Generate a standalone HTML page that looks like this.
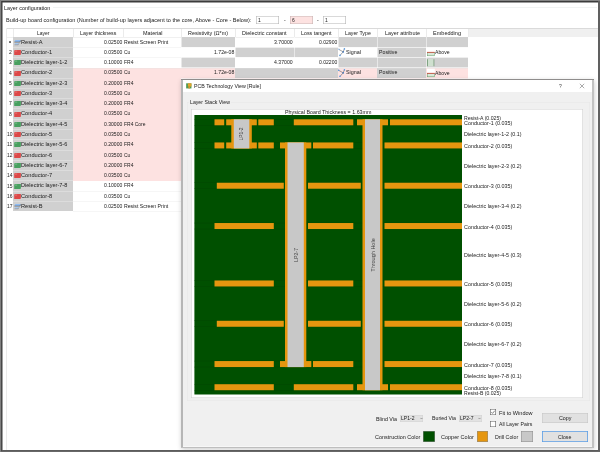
<!DOCTYPE html>
<html lang="en"><head><meta charset="utf-8"><title>PCB Technology View</title>
<style>
html,body{margin:0;padding:0;background:#fff;}
#root{will-change:transform;position:relative;width:600px;height:452px;overflow:hidden;background:#fff;font-family:"Liberation Sans",sans-serif;}
.b{position:absolute;display:block;}
.t{position:absolute;display:block;white-space:nowrap;font-size:10px;line-height:10px;height:10px;transform-origin:0 50%;}
</style></head><body><div id="root">
<span class="t" style="left:4.30px;top:2.60px;transform:scale(0.5456,0.540);color:#1a1a1a">Layer configuration</span>
<div class="b" style="left:52.50px;top:7.00px;width:544.50px;height:0.80px;background:#f1f3f3;"></div>
<span class="t" style="left:6.40px;top:15.10px;transform:scale(0.5544,0.540);color:#1a1a1a">Build-up board configuration (Number of build-up layers adjacent to the core, Above - Core - Below):</span>
<div class="b" style="left:256.00px;top:16.30px;width:23.30px;height:7.90px;background:#fff;box-shadow:inset 0 0 0 0.6px #b4b4b4;"></div>
<span class="t" style="left:257.50px;top:15.20px;transform:scale(0.5000,0.540);color:#1a1a1a">1</span>
<span class="t" style="left:284.30px;top:15.20px;transform:scale(0.5000,0.540);color:#1a1a1a">-</span>
<div class="b" style="left:290.00px;top:16.30px;width:22.70px;height:7.90px;background:#fde2e1;box-shadow:inset 0 0 0 0.6px #c9b5b5;"></div>
<span class="t" style="left:291.50px;top:15.20px;transform:scale(0.5000,0.540);color:#1a1a1a">6</span>
<span class="t" style="left:317.20px;top:15.20px;transform:scale(0.5000,0.540);color:#1a1a1a">-</span>
<div class="b" style="left:323.00px;top:16.30px;width:23.30px;height:7.90px;background:#fff;box-shadow:inset 0 0 0 0.6px #b4b4b4;"></div>
<span class="t" style="left:324.50px;top:15.20px;transform:scale(0.5000,0.540);color:#1a1a1a">1</span>
<div class="b" style="left:6.00px;top:28.00px;width:591.50px;height:0.60px;background:#dadada;"></div>
<div class="b" style="left:6.00px;top:28.00px;width:1.00px;height:422.00px;background:#ebebeb;"></div>
<div class="b" style="left:468.00px;top:28.60px;width:129.50px;height:8.30px;background:#f0f0f0;"></div>
<span class="t" style="left:37.25px;top:28.30px;transform:scale(0.4998,0.540);color:#1a1a1a">Layer</span>
<span class="t" style="left:79.85px;top:28.30px;transform:scale(0.5225,0.540);color:#1a1a1a">Layer thickness</span>
<span class="t" style="left:142.75px;top:28.30px;transform:scale(0.5483,0.540);color:#1a1a1a">Material</span>
<span class="t" style="left:188.00px;top:28.30px;transform:scale(0.5395,0.540);color:#1a1a1a">Resistivity (Ω*m)</span>
<span class="t" style="left:241.75px;top:28.30px;transform:scale(0.5447,0.540);color:#1a1a1a">Dielectric constant</span>
<span class="t" style="left:300.75px;top:28.30px;transform:scale(0.5326,0.540);color:#1a1a1a">Loss tangent</span>
<span class="t" style="left:345.10px;top:28.30px;transform:scale(0.5235,0.540);color:#1a1a1a">Layer Type</span>
<span class="t" style="left:384.50px;top:28.30px;transform:scale(0.5476,0.540);color:#1a1a1a">Layer attribute</span>
<span class="t" style="left:433.30px;top:28.30px;transform:scale(0.5535,0.540);color:#1a1a1a">Embedding</span>
<div class="b" style="left:13.00px;top:29.00px;width:0.60px;height:7.90px;background:#ebebeb;"></div>
<div class="b" style="left:72.70px;top:29.00px;width:0.60px;height:7.90px;background:#ebebeb;"></div>
<div class="b" style="left:123.30px;top:29.00px;width:0.60px;height:7.90px;background:#ebebeb;"></div>
<div class="b" style="left:180.90px;top:29.00px;width:0.60px;height:7.90px;background:#ebebeb;"></div>
<div class="b" style="left:234.70px;top:29.00px;width:0.60px;height:7.90px;background:#ebebeb;"></div>
<div class="b" style="left:293.50px;top:29.00px;width:0.60px;height:7.90px;background:#ebebeb;"></div>
<div class="b" style="left:337.70px;top:29.00px;width:0.60px;height:7.90px;background:#ebebeb;"></div>
<div class="b" style="left:377.10px;top:29.00px;width:0.60px;height:7.90px;background:#ebebeb;"></div>
<div class="b" style="left:426.00px;top:29.00px;width:0.60px;height:7.90px;background:#ebebeb;"></div>
<div class="b" style="left:467.70px;top:29.00px;width:0.60px;height:7.90px;background:#ebebeb;"></div>
<div class="b" style="left:6.60px;top:36.60px;width:461.40px;height:0.50px;background:#f0f0f0;"></div>
<div class="b" style="left:13.30px;top:36.90px;width:59.70px;height:10.27px;background:#d0d0d0;"></div>
<div class="b" style="left:9.30px;top:41.23px;width:1.40px;height:1.50px;background:#6a6a6a;border-radius:0.5px;"></div>
<svg class="b" style="left:13.8px;top:38.73px" width="7.4" height="7" viewBox="0 0 7.4 7"><path d="M1.3 1.1 L6.9 1.1 L5.9 2.9 L0.4 2.9 Z" fill="#8fbcf2"/><path d="M0.4 3.1 L5.9 3.1 L6.9 1.3" stroke="#444" stroke-width="0.55" fill="none"/><path d="M1.2 4.2 L5 4.2 L4.2 5.6 L0.5 5.6 Z" fill="#9cc4f4"/><path d="M0.5 5.8 L4.2 5.8 L5 4.4" stroke="#666" stroke-width="0.4" fill="none"/></svg>
<span class="t" style="left:21.30px;top:36.58px;transform:scale(0.5690,0.540);color:#1a1a1a">Resist-A</span>
<span class="t" style="left:104.40px;top:36.58px;transform:scale(0.5063,0.540);color:#1a1a1a">0.02500</span>
<span class="t" style="left:124.30px;top:36.58px;transform:scale(0.5171,0.540);color:#1a1a1a">Resist Screen Print</span>
<div class="b" style="left:181.20px;top:36.90px;width:53.80px;height:10.27px;background:#d0d0d0;"></div>
<div class="b" style="left:338.00px;top:36.90px;width:130.00px;height:10.27px;background:#d0d0d0;"></div>
<span class="t" style="left:274.40px;top:36.58px;transform:scale(0.5146,0.540);color:#1a1a1a">3.70000</span>
<span class="t" style="left:319.20px;top:36.58px;transform:scale(0.5063,0.540);color:#1a1a1a">0.02900</span>
<div class="b" style="left:13.30px;top:47.17px;width:59.70px;height:10.27px;background:#d0d0d0;"></div>
<span class="t" style="left:9.12px;top:47.01px;transform:scale(0.5000,0.540);color:#1a1a1a">2</span>
<svg class="b" style="left:13.8px;top:49.01px" width="7.4" height="7" viewBox="0 0 7.4 7"><path d="M0.2 1.5 L1.2 0.9 L6.9 0.9 L6.9 5.4 L6 6.1 L0.2 6.1 Z" fill="#dd4848"/><path d="M0.9 2.1 L3.2 2.1" stroke="#f0a0a0" stroke-width="0.5" fill="none"/></svg>
<span class="t" style="left:21.30px;top:46.85px;transform:scale(0.5670,0.540);color:#1a1a1a">Conductor-1</span>
<span class="t" style="left:104.40px;top:46.85px;transform:scale(0.5063,0.540);color:#1a1a1a">0.03500</span>
<span class="t" style="left:124.30px;top:46.85px;transform:scale(0.4970,0.540);color:#1a1a1a">Cu</span>
<span class="t" style="left:214.20px;top:46.85px;transform:scale(0.5143,0.540);color:#1a1a1a">1.72e-08</span>
<div class="b" style="left:235.00px;top:47.17px;width:103.00px;height:10.27px;background:#d0d0d0;"></div>
<svg class="b" style="left:338px;top:48.41px" width="8" height="8.5" viewBox="0 0 8 8.5"><path d="M0.6 1.3 L5.2 3.8 L6.4 0.9 M5.2 3.8 L2 7.4" stroke="#444" stroke-width="0.5" fill="none"/><circle cx="0.7" cy="1.3" r="0.8" fill="#5b9be0"/><circle cx="6.4" cy="0.9" r="0.8" fill="#5b9be0"/><circle cx="5.2" cy="3.9" r="0.8" fill="#3f78c4"/><circle cx="2" cy="7.4" r="0.8" fill="#5b9be0"/></svg>
<span class="t" style="left:345.60px;top:46.85px;transform:scale(0.5396,0.540);color:#1a1a1a">Signal</span>
<div class="b" style="left:377.40px;top:47.17px;width:48.90px;height:10.27px;background:#d0d0d0;"></div>
<span class="t" style="left:378.80px;top:46.85px;transform:scale(0.5226,0.540);color:#1a1a1a">Positive</span>
<svg class="b" style="left:426.8px;top:51.30px" width="8" height="6" viewBox="0 0 8 6" overflow="visible"><rect x="0" y="-3.4" width="7.8" height="4.3" fill="#fff"/><rect x="0.5" y="1.6" width="6.9" height="3.2" fill="#d9e8d9" stroke="#5c9a62" stroke-width="0.5"/><rect x="0" y="0.9" width="7.8" height="0.8" fill="#d2453a"/></svg>
<span class="t" style="left:434.80px;top:47.10px;transform:scale(0.5149,0.540);color:#1a1a1a">Above</span>
<div class="b" style="left:13.30px;top:57.44px;width:59.70px;height:10.27px;background:#d0d0d0;"></div>
<span class="t" style="left:9.12px;top:57.27px;transform:scale(0.5000,0.540);color:#1a1a1a">3</span>
<svg class="b" style="left:13.8px;top:59.27px" width="7.4" height="7" viewBox="0 0 7.4 7"><path d="M0.2 1.5 L1.2 0.9 L6.9 0.9 L6.9 5.4 L6 6.1 L0.2 6.1 Z" fill="#48a060"/><path d="M0.9 2.1 L3.2 2.1" stroke="#a6d8b2" stroke-width="0.5" fill="none"/></svg>
<span class="t" style="left:21.30px;top:57.12px;transform:scale(0.5555,0.540);color:#1a1a1a">Dielectric layer-1-2</span>
<span class="t" style="left:104.40px;top:57.12px;transform:scale(0.5063,0.540);color:#1a1a1a">0.10000</span>
<span class="t" style="left:124.30px;top:57.12px;transform:scale(0.4970,0.540);color:#1a1a1a">FR4</span>
<div class="b" style="left:181.20px;top:57.44px;width:53.80px;height:10.27px;background:#d0d0d0;"></div>
<div class="b" style="left:338.00px;top:57.44px;width:130.00px;height:10.27px;background:#d0d0d0;"></div>
<span class="t" style="left:274.40px;top:57.12px;transform:scale(0.5146,0.540);color:#1a1a1a">4.37000</span>
<span class="t" style="left:319.20px;top:57.12px;transform:scale(0.5063,0.540);color:#1a1a1a">0.02200</span>
<svg class="b" style="left:426.8px;top:58.97px" width="8" height="8" viewBox="0 0 8 8"><rect x="0.6" y="0.2" width="6.4" height="7" fill="#cfe0cf"/><rect x="0.3" y="0.2" width="0.7" height="7" fill="#5f8f64"/><rect x="6.6" y="0.2" width="0.7" height="7" fill="#6b8f6e"/></svg>
<div class="b" style="left:73.00px;top:67.71px;width:395.00px;height:10.27px;background:#fde2e1;"></div>
<div class="b" style="left:13.30px;top:67.71px;width:59.70px;height:10.27px;background:#d0d0d0;"></div>
<span class="t" style="left:9.12px;top:67.55px;transform:scale(0.5000,0.540);color:#1a1a1a">4</span>
<svg class="b" style="left:13.8px;top:69.55px" width="7.4" height="7" viewBox="0 0 7.4 7"><path d="M0.2 1.5 L1.2 0.9 L6.9 0.9 L6.9 5.4 L6 6.1 L0.2 6.1 Z" fill="#dd4848"/><path d="M0.9 2.1 L3.2 2.1" stroke="#f0a0a0" stroke-width="0.5" fill="none"/></svg>
<span class="t" style="left:21.30px;top:67.39px;transform:scale(0.5670,0.540);color:#1a1a1a">Conductor-2</span>
<span class="t" style="left:104.40px;top:67.39px;transform:scale(0.5063,0.540);color:#1a1a1a">0.03500</span>
<span class="t" style="left:124.30px;top:67.39px;transform:scale(0.4970,0.540);color:#1a1a1a">Cu</span>
<span class="t" style="left:214.20px;top:67.39px;transform:scale(0.5143,0.540);color:#1a1a1a">1.72e-08</span>
<div class="b" style="left:235.00px;top:67.71px;width:103.00px;height:10.27px;background:#d0d0d0;"></div>
<svg class="b" style="left:338px;top:68.94px" width="8" height="8.5" viewBox="0 0 8 8.5"><path d="M0.6 1.3 L5.2 3.8 L6.4 0.9 M5.2 3.8 L2 7.4" stroke="#444" stroke-width="0.5" fill="none"/><circle cx="0.7" cy="1.3" r="0.8" fill="#5b9be0"/><circle cx="6.4" cy="0.9" r="0.8" fill="#5b9be0"/><circle cx="5.2" cy="3.9" r="0.8" fill="#3f78c4"/><circle cx="2" cy="7.4" r="0.8" fill="#5b9be0"/></svg>
<span class="t" style="left:345.60px;top:67.39px;transform:scale(0.5396,0.540);color:#1a1a1a">Signal</span>
<div class="b" style="left:377.40px;top:67.71px;width:48.90px;height:10.27px;background:#d0d0d0;"></div>
<span class="t" style="left:378.80px;top:67.39px;transform:scale(0.5226,0.540);color:#1a1a1a">Positive</span>
<svg class="b" style="left:426.8px;top:71.84px" width="8" height="6" viewBox="0 0 8 6" overflow="visible"><rect x="0" y="-3.4" width="7.8" height="4.3" fill="#fff"/><rect x="0.5" y="1.6" width="6.9" height="3.2" fill="#d9e8d9" stroke="#5c9a62" stroke-width="0.5"/><rect x="0" y="0.9" width="7.8" height="0.8" fill="#d2453a"/></svg>
<span class="t" style="left:434.80px;top:67.64px;transform:scale(0.5149,0.540);color:#1a1a1a">Above</span>
<div class="b" style="left:73.00px;top:77.98px;width:395.00px;height:10.27px;background:#fde2e1;"></div>
<div class="b" style="left:13.30px;top:77.98px;width:59.70px;height:10.27px;background:#d0d0d0;"></div>
<span class="t" style="left:9.12px;top:77.81px;transform:scale(0.5000,0.540);color:#1a1a1a">5</span>
<svg class="b" style="left:13.8px;top:79.81px" width="7.4" height="7" viewBox="0 0 7.4 7"><path d="M0.2 1.5 L1.2 0.9 L6.9 0.9 L6.9 5.4 L6 6.1 L0.2 6.1 Z" fill="#48a060"/><path d="M0.9 2.1 L3.2 2.1" stroke="#a6d8b2" stroke-width="0.5" fill="none"/></svg>
<span class="t" style="left:21.30px;top:77.66px;transform:scale(0.5555,0.540);color:#1a1a1a">Dielectric layer-2-3</span>
<span class="t" style="left:104.40px;top:77.66px;transform:scale(0.5063,0.540);color:#1a1a1a">0.20000</span>
<span class="t" style="left:124.30px;top:77.66px;transform:scale(0.4970,0.540);color:#1a1a1a">FR4</span>
<div class="b" style="left:73.00px;top:88.25px;width:395.00px;height:10.27px;background:#fde2e1;"></div>
<div class="b" style="left:13.30px;top:88.25px;width:59.70px;height:10.27px;background:#d0d0d0;"></div>
<span class="t" style="left:9.12px;top:88.08px;transform:scale(0.5000,0.540);color:#1a1a1a">6</span>
<svg class="b" style="left:13.8px;top:90.08px" width="7.4" height="7" viewBox="0 0 7.4 7"><path d="M0.2 1.5 L1.2 0.9 L6.9 0.9 L6.9 5.4 L6 6.1 L0.2 6.1 Z" fill="#dd4848"/><path d="M0.9 2.1 L3.2 2.1" stroke="#f0a0a0" stroke-width="0.5" fill="none"/></svg>
<span class="t" style="left:21.30px;top:87.93px;transform:scale(0.5670,0.540);color:#1a1a1a">Conductor-3</span>
<span class="t" style="left:104.40px;top:87.93px;transform:scale(0.5063,0.540);color:#1a1a1a">0.03500</span>
<span class="t" style="left:124.30px;top:87.93px;transform:scale(0.4970,0.540);color:#1a1a1a">Cu</span>
<div class="b" style="left:73.00px;top:98.52px;width:395.00px;height:10.27px;background:#fde2e1;"></div>
<div class="b" style="left:13.30px;top:98.52px;width:59.70px;height:10.27px;background:#d0d0d0;"></div>
<span class="t" style="left:9.12px;top:98.36px;transform:scale(0.5000,0.540);color:#1a1a1a">7</span>
<svg class="b" style="left:13.8px;top:100.36px" width="7.4" height="7" viewBox="0 0 7.4 7"><path d="M0.2 1.5 L1.2 0.9 L6.9 0.9 L6.9 5.4 L6 6.1 L0.2 6.1 Z" fill="#48a060"/><path d="M0.9 2.1 L3.2 2.1" stroke="#a6d8b2" stroke-width="0.5" fill="none"/></svg>
<span class="t" style="left:21.30px;top:98.20px;transform:scale(0.5555,0.540);color:#1a1a1a">Dielectric layer-3-4</span>
<span class="t" style="left:104.40px;top:98.20px;transform:scale(0.5063,0.540);color:#1a1a1a">0.20000</span>
<span class="t" style="left:124.30px;top:98.20px;transform:scale(0.4970,0.540);color:#1a1a1a">FR4</span>
<div class="b" style="left:73.00px;top:108.79px;width:395.00px;height:10.27px;background:#fde2e1;"></div>
<div class="b" style="left:13.30px;top:108.79px;width:59.70px;height:10.27px;background:#d0d0d0;"></div>
<span class="t" style="left:9.12px;top:108.62px;transform:scale(0.5000,0.540);color:#1a1a1a">8</span>
<svg class="b" style="left:13.8px;top:110.62px" width="7.4" height="7" viewBox="0 0 7.4 7"><path d="M0.2 1.5 L1.2 0.9 L6.9 0.9 L6.9 5.4 L6 6.1 L0.2 6.1 Z" fill="#dd4848"/><path d="M0.9 2.1 L3.2 2.1" stroke="#f0a0a0" stroke-width="0.5" fill="none"/></svg>
<span class="t" style="left:21.30px;top:108.47px;transform:scale(0.5670,0.540);color:#1a1a1a">Conductor-4</span>
<span class="t" style="left:104.40px;top:108.47px;transform:scale(0.5063,0.540);color:#1a1a1a">0.03500</span>
<span class="t" style="left:124.30px;top:108.47px;transform:scale(0.4970,0.540);color:#1a1a1a">Cu</span>
<div class="b" style="left:73.00px;top:119.06px;width:395.00px;height:10.27px;background:#fde2e1;"></div>
<div class="b" style="left:13.30px;top:119.06px;width:59.70px;height:10.27px;background:#d0d0d0;"></div>
<span class="t" style="left:9.12px;top:118.90px;transform:scale(0.5000,0.540);color:#1a1a1a">9</span>
<svg class="b" style="left:13.8px;top:120.90px" width="7.4" height="7" viewBox="0 0 7.4 7"><path d="M0.2 1.5 L1.2 0.9 L6.9 0.9 L6.9 5.4 L6 6.1 L0.2 6.1 Z" fill="#48a060"/><path d="M0.9 2.1 L3.2 2.1" stroke="#a6d8b2" stroke-width="0.5" fill="none"/></svg>
<span class="t" style="left:21.30px;top:118.75px;transform:scale(0.5555,0.540);color:#1a1a1a">Dielectric layer-4-5</span>
<span class="t" style="left:104.40px;top:118.75px;transform:scale(0.5063,0.540);color:#1a1a1a">0.30000</span>
<span class="t" style="left:124.30px;top:118.75px;transform:scale(0.4970,0.540);color:#1a1a1a">FR4 Core</span>
<div class="b" style="left:73.00px;top:129.33px;width:395.00px;height:10.27px;background:#fde2e1;"></div>
<div class="b" style="left:13.30px;top:129.33px;width:59.70px;height:10.27px;background:#d0d0d0;"></div>
<span class="t" style="left:6.94px;top:129.16px;transform:scale(0.5000,0.540);color:#1a1a1a">10</span>
<svg class="b" style="left:13.8px;top:131.16px" width="7.4" height="7" viewBox="0 0 7.4 7"><path d="M0.2 1.5 L1.2 0.9 L6.9 0.9 L6.9 5.4 L6 6.1 L0.2 6.1 Z" fill="#dd4848"/><path d="M0.9 2.1 L3.2 2.1" stroke="#f0a0a0" stroke-width="0.5" fill="none"/></svg>
<span class="t" style="left:21.30px;top:129.01px;transform:scale(0.5670,0.540);color:#1a1a1a">Conductor-5</span>
<span class="t" style="left:104.40px;top:129.01px;transform:scale(0.5063,0.540);color:#1a1a1a">0.03500</span>
<span class="t" style="left:124.30px;top:129.01px;transform:scale(0.4970,0.540);color:#1a1a1a">Cu</span>
<div class="b" style="left:73.00px;top:139.60px;width:395.00px;height:10.27px;background:#fde2e1;"></div>
<div class="b" style="left:13.30px;top:139.60px;width:59.70px;height:10.27px;background:#d0d0d0;"></div>
<span class="t" style="left:7.31px;top:139.44px;transform:scale(0.5000,0.540);color:#1a1a1a">11</span>
<svg class="b" style="left:13.8px;top:141.44px" width="7.4" height="7" viewBox="0 0 7.4 7"><path d="M0.2 1.5 L1.2 0.9 L6.9 0.9 L6.9 5.4 L6 6.1 L0.2 6.1 Z" fill="#48a060"/><path d="M0.9 2.1 L3.2 2.1" stroke="#a6d8b2" stroke-width="0.5" fill="none"/></svg>
<span class="t" style="left:21.30px;top:139.29px;transform:scale(0.5555,0.540);color:#1a1a1a">Dielectric layer-5-6</span>
<span class="t" style="left:104.40px;top:139.29px;transform:scale(0.5063,0.540);color:#1a1a1a">0.20000</span>
<span class="t" style="left:124.30px;top:139.29px;transform:scale(0.4970,0.540);color:#1a1a1a">FR4</span>
<div class="b" style="left:73.00px;top:149.87px;width:395.00px;height:10.27px;background:#fde2e1;"></div>
<div class="b" style="left:13.30px;top:149.87px;width:59.70px;height:10.27px;background:#d0d0d0;"></div>
<span class="t" style="left:6.94px;top:149.70px;transform:scale(0.5000,0.540);color:#1a1a1a">12</span>
<svg class="b" style="left:13.8px;top:151.70px" width="7.4" height="7" viewBox="0 0 7.4 7"><path d="M0.2 1.5 L1.2 0.9 L6.9 0.9 L6.9 5.4 L6 6.1 L0.2 6.1 Z" fill="#dd4848"/><path d="M0.9 2.1 L3.2 2.1" stroke="#f0a0a0" stroke-width="0.5" fill="none"/></svg>
<span class="t" style="left:21.30px;top:149.56px;transform:scale(0.5670,0.540);color:#1a1a1a">Conductor-6</span>
<span class="t" style="left:104.40px;top:149.56px;transform:scale(0.5063,0.540);color:#1a1a1a">0.03500</span>
<span class="t" style="left:124.30px;top:149.56px;transform:scale(0.4970,0.540);color:#1a1a1a">Cu</span>
<div class="b" style="left:73.00px;top:160.14px;width:395.00px;height:10.27px;background:#fde2e1;"></div>
<div class="b" style="left:13.30px;top:160.14px;width:59.70px;height:10.27px;background:#d0d0d0;"></div>
<span class="t" style="left:6.94px;top:159.97px;transform:scale(0.5000,0.540);color:#1a1a1a">13</span>
<svg class="b" style="left:13.8px;top:161.97px" width="7.4" height="7" viewBox="0 0 7.4 7"><path d="M0.2 1.5 L1.2 0.9 L6.9 0.9 L6.9 5.4 L6 6.1 L0.2 6.1 Z" fill="#48a060"/><path d="M0.9 2.1 L3.2 2.1" stroke="#a6d8b2" stroke-width="0.5" fill="none"/></svg>
<span class="t" style="left:21.30px;top:159.82px;transform:scale(0.5555,0.540);color:#1a1a1a">Dielectric layer-6-7</span>
<span class="t" style="left:104.40px;top:159.82px;transform:scale(0.5063,0.540);color:#1a1a1a">0.20000</span>
<span class="t" style="left:124.30px;top:159.82px;transform:scale(0.4970,0.540);color:#1a1a1a">FR4</span>
<div class="b" style="left:73.00px;top:170.41px;width:395.00px;height:10.27px;background:#fde2e1;"></div>
<div class="b" style="left:13.30px;top:170.41px;width:59.70px;height:10.27px;background:#d0d0d0;"></div>
<span class="t" style="left:6.94px;top:170.25px;transform:scale(0.5000,0.540);color:#1a1a1a">14</span>
<svg class="b" style="left:13.8px;top:172.25px" width="7.4" height="7" viewBox="0 0 7.4 7"><path d="M0.2 1.5 L1.2 0.9 L6.9 0.9 L6.9 5.4 L6 6.1 L0.2 6.1 Z" fill="#dd4848"/><path d="M0.9 2.1 L3.2 2.1" stroke="#f0a0a0" stroke-width="0.5" fill="none"/></svg>
<span class="t" style="left:21.30px;top:170.10px;transform:scale(0.5670,0.540);color:#1a1a1a">Conductor-7</span>
<span class="t" style="left:104.40px;top:170.10px;transform:scale(0.5063,0.540);color:#1a1a1a">0.03500</span>
<span class="t" style="left:124.30px;top:170.10px;transform:scale(0.4970,0.540);color:#1a1a1a">Cu</span>
<div class="b" style="left:13.30px;top:180.68px;width:59.70px;height:10.27px;background:#d0d0d0;"></div>
<span class="t" style="left:6.94px;top:180.51px;transform:scale(0.5000,0.540);color:#1a1a1a">15</span>
<svg class="b" style="left:13.8px;top:182.51px" width="7.4" height="7" viewBox="0 0 7.4 7"><path d="M0.2 1.5 L1.2 0.9 L6.9 0.9 L6.9 5.4 L6 6.1 L0.2 6.1 Z" fill="#48a060"/><path d="M0.9 2.1 L3.2 2.1" stroke="#a6d8b2" stroke-width="0.5" fill="none"/></svg>
<span class="t" style="left:21.30px;top:180.37px;transform:scale(0.5555,0.540);color:#1a1a1a">Dielectric layer-7-8</span>
<span class="t" style="left:104.40px;top:180.37px;transform:scale(0.5063,0.540);color:#1a1a1a">0.10000</span>
<span class="t" style="left:124.30px;top:180.37px;transform:scale(0.4970,0.540);color:#1a1a1a">FR4</span>
<div class="b" style="left:13.30px;top:190.95px;width:59.70px;height:10.27px;background:#d0d0d0;"></div>
<span class="t" style="left:6.94px;top:190.78px;transform:scale(0.5000,0.540);color:#1a1a1a">16</span>
<svg class="b" style="left:13.8px;top:192.78px" width="7.4" height="7" viewBox="0 0 7.4 7"><path d="M0.2 1.5 L1.2 0.9 L6.9 0.9 L6.9 5.4 L6 6.1 L0.2 6.1 Z" fill="#dd4848"/><path d="M0.9 2.1 L3.2 2.1" stroke="#f0a0a0" stroke-width="0.5" fill="none"/></svg>
<span class="t" style="left:21.30px;top:190.63px;transform:scale(0.5670,0.540);color:#1a1a1a">Conductor-8</span>
<span class="t" style="left:104.40px;top:190.63px;transform:scale(0.5063,0.540);color:#1a1a1a">0.03500</span>
<span class="t" style="left:124.30px;top:190.63px;transform:scale(0.4970,0.540);color:#1a1a1a">Cu</span>
<div class="b" style="left:13.30px;top:201.22px;width:59.70px;height:10.27px;background:#d0d0d0;"></div>
<span class="t" style="left:6.94px;top:201.06px;transform:scale(0.5000,0.540);color:#1a1a1a">17</span>
<svg class="b" style="left:13.8px;top:203.06px" width="7.4" height="7" viewBox="0 0 7.4 7"><path d="M1.3 1.1 L6.9 1.1 L5.9 2.9 L0.4 2.9 Z" fill="#8fbcf2"/><path d="M0.4 3.1 L5.9 3.1 L6.9 1.3" stroke="#444" stroke-width="0.55" fill="none"/><path d="M1.2 4.2 L5 4.2 L4.2 5.6 L0.5 5.6 Z" fill="#9cc4f4"/><path d="M0.5 5.8 L4.2 5.8 L5 4.4" stroke="#666" stroke-width="0.4" fill="none"/></svg>
<span class="t" style="left:21.30px;top:200.91px;transform:scale(0.5690,0.540);color:#1a1a1a">Resist-B</span>
<span class="t" style="left:104.40px;top:200.91px;transform:scale(0.5063,0.540);color:#1a1a1a">0.02500</span>
<span class="t" style="left:124.30px;top:200.91px;transform:scale(0.5171,0.540);color:#1a1a1a">Resist Screen Print</span>
<div class="b" style="left:13.30px;top:46.87px;width:59.70px;height:0.60px;background:rgba(255,255,255,0.25);"></div>
<div class="b" style="left:73.00px;top:46.97px;width:395.00px;height:0.40px;background:rgba(225,225,225,0.3);"></div>
<div class="b" style="left:13.30px;top:57.14px;width:59.70px;height:0.60px;background:rgba(255,255,255,0.25);"></div>
<div class="b" style="left:73.00px;top:57.24px;width:395.00px;height:0.40px;background:rgba(225,225,225,0.3);"></div>
<div class="b" style="left:13.30px;top:67.41px;width:59.70px;height:0.60px;background:rgba(255,255,255,0.25);"></div>
<div class="b" style="left:73.00px;top:67.51px;width:395.00px;height:0.40px;background:rgba(225,225,225,0.3);"></div>
<div class="b" style="left:13.30px;top:77.68px;width:59.70px;height:0.60px;background:rgba(255,255,255,0.25);"></div>
<div class="b" style="left:13.30px;top:87.95px;width:59.70px;height:0.60px;background:rgba(255,255,255,0.25);"></div>
<div class="b" style="left:13.30px;top:98.22px;width:59.70px;height:0.60px;background:rgba(255,255,255,0.25);"></div>
<div class="b" style="left:13.30px;top:108.49px;width:59.70px;height:0.60px;background:rgba(255,255,255,0.25);"></div>
<div class="b" style="left:13.30px;top:118.76px;width:59.70px;height:0.60px;background:rgba(255,255,255,0.25);"></div>
<div class="b" style="left:13.30px;top:129.03px;width:59.70px;height:0.60px;background:rgba(255,255,255,0.25);"></div>
<div class="b" style="left:13.30px;top:139.30px;width:59.70px;height:0.60px;background:rgba(255,255,255,0.25);"></div>
<div class="b" style="left:13.30px;top:149.57px;width:59.70px;height:0.60px;background:rgba(255,255,255,0.25);"></div>
<div class="b" style="left:13.30px;top:159.84px;width:59.70px;height:0.60px;background:rgba(255,255,255,0.25);"></div>
<div class="b" style="left:13.30px;top:170.11px;width:59.70px;height:0.60px;background:rgba(255,255,255,0.25);"></div>
<div class="b" style="left:13.30px;top:180.38px;width:59.70px;height:0.60px;background:rgba(255,255,255,0.25);"></div>
<div class="b" style="left:13.30px;top:190.65px;width:59.70px;height:0.60px;background:rgba(255,255,255,0.25);"></div>
<div class="b" style="left:73.00px;top:190.75px;width:395.00px;height:0.40px;background:rgba(225,225,225,0.3);"></div>
<div class="b" style="left:13.30px;top:200.92px;width:59.70px;height:0.60px;background:rgba(255,255,255,0.25);"></div>
<div class="b" style="left:73.00px;top:201.02px;width:395.00px;height:0.40px;background:rgba(225,225,225,0.3);"></div>
<div class="b" style="left:13.30px;top:211.19px;width:59.70px;height:0.60px;background:rgba(255,255,255,0.25);"></div>
<div class="b" style="left:73.00px;top:211.29px;width:395.00px;height:0.40px;background:rgba(225,225,225,0.3);"></div>
<div class="b" style="left:181.20px;top:46.87px;width:286.80px;height:0.60px;background:rgba(255,255,255,0.6);"></div>
<div class="b" style="left:181.20px;top:57.14px;width:286.80px;height:0.60px;background:rgba(255,255,255,0.6);"></div>
<div class="b" style="left:181.20px;top:67.41px;width:286.80px;height:0.60px;background:rgba(255,255,255,0.6);"></div>
<div class="b" style="left:181.20px;top:77.68px;width:286.80px;height:0.60px;background:rgba(255,255,255,0.6);"></div>
<div class="b" style="left:181.00px;top:36.90px;width:0.40px;height:30.81px;background:rgba(255,255,255,0.5);"></div>
<div class="b" style="left:234.80px;top:36.90px;width:0.40px;height:30.81px;background:rgba(255,255,255,0.5);"></div>
<div class="b" style="left:293.60px;top:36.90px;width:0.40px;height:30.81px;background:rgba(255,255,255,0.5);"></div>
<div class="b" style="left:337.80px;top:36.90px;width:0.40px;height:30.81px;background:rgba(255,255,255,0.5);"></div>
<div class="b" style="left:377.20px;top:36.90px;width:0.40px;height:30.81px;background:rgba(255,255,255,0.5);"></div>
<div class="b" style="left:426.10px;top:36.90px;width:0.40px;height:30.81px;background:rgba(255,255,255,0.5);"></div>
<div class="b" style="left:181.2px;top:78.8px;width:412.60px;height:369.20px;background:#f0f0f0;box-shadow:0 1px 5px 0.5px rgba(0,0,0,0.2);"></div>
<div class="b" style="left:181.20px;top:78.80px;width:412.60px;height:13.60px;background:#fff;"></div>
<div class="b" style="left:181.20px;top:78.80px;width:1.60px;height:369.20px;background:#b6b6b6;"></div>
<div class="b" style="left:592.20px;top:78.80px;width:1.60px;height:369.20px;background:#c2c2c2;"></div>
<div class="b" style="left:181.20px;top:446.50px;width:412.60px;height:1.50px;background:#bebebe;"></div>
<div class="b" style="left:182.80px;top:445.50px;width:409.40px;height:1.00px;background:#f7f7f7;"></div>
<div class="b" style="left:181.20px;top:78.80px;width:412.60px;height:1.00px;background:#8f8d8c;"></div>
<svg class="b" style="left:186px;top:83px" width="5.6" height="5.6" viewBox="0 0 7 7"><rect x="0.2" y="0.4" width="6.6" height="6.4" fill="#4f9a53"/><rect x="2.4" y="0.4" width="4.4" height="4" fill="#e3a22a"/><rect x="3" y="4" width="2" height="2.8" fill="#d9972a"/></svg>
<span class="t" style="left:193.80px;top:80.90px;transform:scale(0.5279,0.540);color:#1a1a1a">PCB Technology View [Rule]</span>
<span class="t" style="left:558.91px;top:81.00px;transform:scale(0.5000,0.540);color:#444">?</span>
<svg class="b" style="left:579px;top:83px" width="6" height="6" viewBox="0 0 6 6"><path d="M0.8 0.8 L5.2 5.2 M5.2 0.8 L0.8 5.2" stroke="#555" stroke-width="0.5"/></svg>
<div class="b" style="left:187.20px;top:101.50px;width:403.00px;height:299.90px;box-shadow:inset 0 0 0 0.5px #e6e6e6;"></div>
<div class="b" style="left:188.50px;top:98.00px;width:42.50px;height:7.00px;background:#f0f0f0;"></div>
<span class="t" style="left:189.50px;top:96.80px;transform:scale(0.5190,0.540);color:#1a1a1a">Layer Stack View</span>
<div class="b" style="left:191.00px;top:109.00px;width:391.70px;height:288.80px;background:#fff;box-shadow:inset 0 0 0 0.6px #d0d0d0;"></div>
<span class="t" style="left:285.00px;top:107.40px;transform:scale(0.5345,0.540);color:#222">Physical Board Thickness = 1.63mm</span>
<svg class="b" style="left:0;top:0" width="600" height="452" viewBox="0 0 600 452"><rect x="194.40" y="115.00" width="267.60" height="279.50" fill="#005000"/><rect x="194.40" y="119.09" width="267.60" height="0.4" fill="#004400"/><rect x="194.40" y="125.09" width="267.60" height="0.4" fill="#004400"/><rect x="194.40" y="142.24" width="267.60" height="0.4" fill="#004400"/><rect x="194.40" y="148.24" width="267.60" height="0.4" fill="#004400"/><rect x="194.40" y="182.53" width="267.60" height="0.4" fill="#004400"/><rect x="194.40" y="188.53" width="267.60" height="0.4" fill="#004400"/><rect x="194.40" y="222.83" width="267.60" height="0.4" fill="#004400"/><rect x="194.40" y="228.83" width="267.60" height="0.4" fill="#004400"/><rect x="194.40" y="280.27" width="267.60" height="0.4" fill="#004400"/><rect x="194.40" y="286.27" width="267.60" height="0.4" fill="#004400"/><rect x="194.40" y="320.57" width="267.60" height="0.4" fill="#004400"/><rect x="194.40" y="326.57" width="267.60" height="0.4" fill="#004400"/><rect x="194.40" y="360.86" width="267.60" height="0.4" fill="#004400"/><rect x="194.40" y="366.86" width="267.60" height="0.4" fill="#004400"/><rect x="194.40" y="384.01" width="267.60" height="0.4" fill="#004400"/><rect x="194.40" y="390.01" width="267.60" height="0.4" fill="#004400"/><rect x="214.50" y="119.29" width="9.70" height="6.00" fill="#e5960f"/><rect x="226.20" y="119.29" width="30.60" height="6.00" fill="#e5960f"/><rect x="258.30" y="119.29" width="15.50" height="6.00" fill="#e5960f"/><rect x="293.80" y="119.29" width="59.50" height="6.00" fill="#e5960f"/><rect x="357.00" y="119.29" width="31.00" height="6.00" fill="#e5960f"/><rect x="390.00" y="119.29" width="72.00" height="6.00" fill="#e5960f"/><rect x="214.50" y="142.44" width="9.70" height="6.00" fill="#e5960f"/><rect x="226.20" y="142.44" width="30.60" height="6.00" fill="#e5960f"/><rect x="258.30" y="142.44" width="15.50" height="6.00" fill="#e5960f"/><rect x="280.00" y="142.44" width="31.30" height="6.00" fill="#e5960f"/><rect x="313.00" y="142.44" width="40.30" height="6.00" fill="#e5960f"/><rect x="384.50" y="142.44" width="77.50" height="6.00" fill="#e5960f"/><rect x="216.80" y="182.73" width="67.00" height="6.00" fill="#e5960f"/><rect x="308.00" y="182.73" width="52.80" height="6.00" fill="#e5960f"/><rect x="384.50" y="182.73" width="77.50" height="6.00" fill="#e5960f"/><rect x="214.50" y="223.03" width="59.30" height="6.00" fill="#e5960f"/><rect x="308.00" y="223.03" width="45.30" height="6.00" fill="#e5960f"/><rect x="384.50" y="223.03" width="77.50" height="6.00" fill="#e5960f"/><rect x="214.50" y="280.47" width="59.30" height="6.00" fill="#e5960f"/><rect x="308.00" y="280.47" width="45.30" height="6.00" fill="#e5960f"/><rect x="384.50" y="280.47" width="77.50" height="6.00" fill="#e5960f"/><rect x="216.80" y="320.77" width="67.00" height="6.00" fill="#e5960f"/><rect x="308.00" y="320.77" width="52.80" height="6.00" fill="#e5960f"/><rect x="384.50" y="320.77" width="77.50" height="6.00" fill="#e5960f"/><rect x="214.50" y="361.06" width="59.30" height="6.00" fill="#e5960f"/><rect x="280.00" y="361.06" width="31.30" height="6.00" fill="#e5960f"/><rect x="313.00" y="361.06" width="40.30" height="6.00" fill="#e5960f"/><rect x="384.50" y="361.06" width="77.50" height="6.00" fill="#e5960f"/><rect x="214.50" y="384.21" width="59.30" height="6.00" fill="#e5960f"/><rect x="293.80" y="384.21" width="59.50" height="6.00" fill="#e5960f"/><rect x="357.00" y="384.21" width="31.00" height="6.00" fill="#e5960f"/><rect x="390.00" y="384.21" width="72.00" height="6.00" fill="#e5960f"/><rect x="231.30" y="119.29" width="20.50" height="29.15" fill="#e5960f"/><rect x="233.80" y="119.29" width="15.50" height="29.15" fill="#c8c8c8"/><rect x="285.00" y="142.44" width="21.30" height="224.63" fill="#e5960f"/><rect x="287.50" y="142.44" width="16.30" height="224.63" fill="#c8c8c8"/><rect x="362.50" y="119.29" width="20.00" height="270.93" fill="#e5960f"/><rect x="365.00" y="119.29" width="15.00" height="270.93" fill="#c8c8c8"/></svg>
<span class="t" style="left:241.30px;top:128.80px;transform-origin:0 50%;transform:rotate(-90deg) scale(0.4872,0.540) translateX(-50%);color:#444">LP1-2</span>
<span class="t" style="left:295.80px;top:249.60px;transform-origin:0 50%;transform:rotate(-90deg) scale(0.5247,0.540) translateX(-50%);color:#444">LP2-7</span>
<span class="t" style="left:372.60px;top:249.60px;transform-origin:0 50%;transform:rotate(-90deg) scale(0.5529,0.540) translateX(-50%);color:#444">Through Hole</span>
<span class="t" style="left:463.80px;top:112.90px;transform:scale(0.5161,0.540);color:#222">Resist-A (0.025)</span>
<span class="t" style="left:463.80px;top:118.10px;transform:scale(0.5398,0.540);color:#222">Conductor-1 (0.035)</span>
<span class="t" style="left:463.80px;top:129.36px;transform:scale(0.5390,0.540);color:#222">Dielectric layer-1-2 (0.1)</span>
<span class="t" style="left:463.80px;top:140.94px;transform:scale(0.5398,0.540);color:#222">Conductor-2 (0.035)</span>
<span class="t" style="left:463.80px;top:161.08px;transform:scale(0.5390,0.540);color:#222">Dielectric layer-2-3 (0.2)</span>
<span class="t" style="left:463.80px;top:181.23px;transform:scale(0.5398,0.540);color:#222">Conductor-3 (0.035)</span>
<span class="t" style="left:463.80px;top:201.38px;transform:scale(0.5390,0.540);color:#222">Dielectric layer-3-4 (0.2)</span>
<span class="t" style="left:463.80px;top:221.53px;transform:scale(0.5398,0.540);color:#222">Conductor-4 (0.035)</span>
<span class="t" style="left:463.80px;top:250.25px;transform:scale(0.5390,0.540);color:#222">Dielectric layer-4-5 (0.3)</span>
<span class="t" style="left:463.80px;top:278.97px;transform:scale(0.5398,0.540);color:#222">Conductor-5 (0.035)</span>
<span class="t" style="left:463.80px;top:299.12px;transform:scale(0.5390,0.540);color:#222">Dielectric layer-5-6 (0.2)</span>
<span class="t" style="left:463.80px;top:319.27px;transform:scale(0.5398,0.540);color:#222">Conductor-6 (0.035)</span>
<span class="t" style="left:463.80px;top:339.42px;transform:scale(0.5390,0.540);color:#222">Dielectric layer-6-7 (0.2)</span>
<span class="t" style="left:463.80px;top:359.56px;transform:scale(0.5398,0.540);color:#222">Conductor-7 (0.035)</span>
<span class="t" style="left:463.80px;top:371.14px;transform:scale(0.5390,0.540);color:#222">Dielectric layer-7-8 (0.1)</span>
<span class="t" style="left:463.80px;top:383.30px;transform:scale(0.5398,0.540);color:#222">Conductor-8 (0.035)</span>
<span class="t" style="left:463.80px;top:388.10px;transform:scale(0.5122,0.540);color:#222">Resist-B (0.025)</span>
<span class="t" style="left:376.20px;top:413.70px;transform:scale(0.5345,0.540);color:#1a1a1a">Blind Via</span>
<div class="b" style="left:399.80px;top:414.50px;width:23.60px;height:7.90px;background:#e2e2e2;box-shadow:inset 0 0 0 0.5px #d2d2d2;"></div>
<span class="t" style="left:401.30px;top:413.20px;transform:scale(0.5059,0.540);color:#1a1a1a">LP1-2</span>
<svg class="b" style="left:419.5px;top:417px" width="3" height="3" viewBox="0 0 3 3"><path d="M0.4 0.9 L1.5 2 L2.6 0.9" stroke="#555" stroke-width="0.45" fill="none"/></svg>
<span class="t" style="left:431.70px;top:413.40px;transform:scale(0.5223,0.540);color:#1a1a1a">Buried Via</span>
<div class="b" style="left:458.50px;top:414.50px;width:23.40px;height:7.90px;background:#e2e2e2;box-shadow:inset 0 0 0 0.5px #d2d2d2;"></div>
<span class="t" style="left:460.00px;top:413.20px;transform:scale(0.5059,0.540);color:#1a1a1a">LP2-7</span>
<svg class="b" style="left:478px;top:417px" width="3" height="3" viewBox="0 0 3 3"><path d="M0.4 0.9 L1.5 2 L2.6 0.9" stroke="#555" stroke-width="0.45" fill="none"/></svg>
<div class="b" style="left:490.20px;top:409.40px;width:6.10px;height:6.10px;background:#fff;box-shadow:inset 0 0 0 0.6px #5e5e5e;"></div>
<svg class="b" style="left:490.2px;top:409.4px" width="6.1" height="6.1" viewBox="0 0 6 6"><path d="M1.3 3.1 L2.5 4.3 L4.7 1.7" stroke="#333" stroke-width="0.6" fill="none"/></svg>
<span class="t" style="left:499.00px;top:407.70px;transform:scale(0.5547,0.540);color:#1a1a1a">Fit to Window</span>
<div class="b" style="left:490.20px;top:420.90px;width:6.10px;height:6.10px;background:#fff;box-shadow:inset 0 0 0 0.6px #5e5e5e;"></div>
<span class="t" style="left:499.20px;top:419.10px;transform:scale(0.5150,0.540);color:#1a1a1a">All Layer Pairs</span>
<div class="b" style="left:542.30px;top:413.20px;width:45.40px;height:9.60px;background:#e1e1e1;box-shadow:inset 0 0 0 0.5px #c4c4c4;"></div>
<span class="t" style="left:558.75px;top:413.00px;transform:scale(0.5355,0.540);color:#1a1a1a">Copy</span>
<div class="b" style="left:542.30px;top:431.30px;width:45.40px;height:10.50px;background:#e1e1e1;box-shadow:inset 0 0 0 0.8px #5c9fe6;"></div>
<span class="t" style="left:558.35px;top:431.60px;transform:scale(0.5202,0.540);color:#1a1a1a">Close</span>
<span class="t" style="left:374.70px;top:431.80px;transform:scale(0.5483,0.540);color:#1a1a1a">Construction Color</span>
<div class="b" style="left:423.20px;top:430.50px;width:11.80px;height:11.50px;background:#005000;box-shadow:inset 0 0 0 0.5px #8a8a8a;"></div>
<span class="t" style="left:441.30px;top:431.80px;transform:scale(0.5516,0.540);color:#1a1a1a">Copper Color</span>
<div class="b" style="left:476.90px;top:430.50px;width:11.60px;height:11.50px;background:#e5960f;box-shadow:inset 0 0 0 0.5px #8a8a8a;"></div>
<span class="t" style="left:494.90px;top:431.80px;transform:scale(0.5286,0.540);color:#1a1a1a">Drill Color</span>
<div class="b" style="left:521.30px;top:430.50px;width:11.80px;height:11.50px;background:#c8c8c8;box-shadow:inset 0 0 0 0.5px #8a8a8a;"></div>
<div class="b" style="left:0.00px;top:0.00px;width:600.00px;height:1.00px;background:#858585;"></div>
<div class="b" style="left:0.00px;top:1.00px;width:600.00px;height:1.00px;background:#3c3c3c;"></div>
<div class="b" style="left:0.00px;top:450.00px;width:600.00px;height:1.00px;background:#5c5c5c;"></div>
<div class="b" style="left:0.00px;top:451.00px;width:600.00px;height:1.00px;background:#686868;"></div>
<div class="b" style="left:0.00px;top:0.00px;width:1.00px;height:452.00px;background:#808080;"></div>
<div class="b" style="left:1.00px;top:1.00px;width:1.00px;height:450.00px;background:#484848;"></div>
<div class="b" style="left:598.00px;top:1.00px;width:2.00px;height:450.00px;background:#606060;"></div>
<div class="b" style="left:2.00px;top:2.00px;width:596.00px;height:0.25px;background:rgba(60,60,60,0.5);"></div>
<div class="b" style="left:2.00px;top:2.00px;width:0.20px;height:448.00px;background:rgba(60,60,60,0.5);"></div>
</div></body></html>
